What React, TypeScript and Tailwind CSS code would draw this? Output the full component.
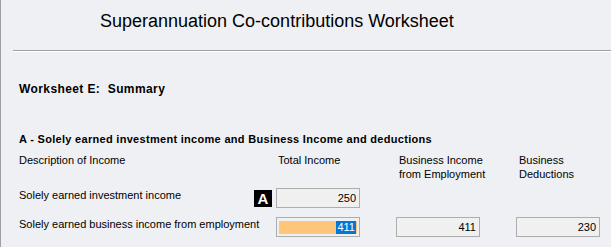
import React from 'react';

const Field: React.FC<{ value: string }> = ({ value }) => (
    <div className="w-[84px] h-[20px] border border-[#adadad] bg-[#f0f0f0] pr-[3px] text-right text-[11px] leading-[18px]">
        {value}
    </div>
);

const SelectedField: React.FC<{ value: string }> = ({ value }) => (
    <div className="w-[84px] h-[20px] border border-[#adadad] bg-[#f0f0f0] px-[2px] pt-[3px]">
        <div className="h-[13px] bg-[#ffc578] flex justify-end pr-[1px]">
            <span className="bg-[#0078d7] text-white text-[11px] leading-[13px] px-[1px]">{value}</span>
        </div>
    </div>
);

export default function App() {
    return (
        <div className="min-h-[247px] w-[611px] overflow-hidden bg-[#eff0f4] border-l border-[#a0a0a0] font-['Liberation_Sans',Arial,sans-serif] text-black">
            <h1 className="pt-[11px] pl-[99px] text-[18px] leading-[21px]">
                Superannuation Co-contributions Worksheet
            </h1>
            <div className="mt-[18px] ml-[12px] border-t border-[#a0a0a0] border-b border-b-white" />

            <div className="pl-[18px]">
                <h2 className="mt-[30px] text-[12px] leading-[14px] font-bold tracking-[0.4px]">Worksheet E:&nbsp; Summary</h2>

                <h3 className="mt-[37px] text-[11px] leading-[13px] font-bold tracking-[0.3px]">
                    A - Solely earned investment income and Business Income and deductions
                </h3>

                <div className="mt-[7px] flex text-[11px] leading-[14px]">
                    <div className="w-[257px]">Description of Income</div>
                    <div className="w-[120px] pl-[2px]">Total Income</div>
                    <div className="w-[120px] pl-[3px]">
                        Business Income
                        <br />
                        from Employment
                    </div>
                    <div className="pl-[3px]">
                        Business
                        <br />
                        Deductions
                    </div>
                </div>

                <div className="mt-[7px] flex items-start text-[11px] leading-[14px]">
                    <div className="w-[235px]">Solely earned investment income</div>
                    <div className="mt-[2px] mr-[4px] w-[18px] h-[17px] bg-black text-white font-bold text-[15px] leading-[17px] text-center">
                        A
                    </div>
                    <Field value="250" />
                </div>

                <div className="mt-[9px] flex items-start text-[11px] leading-[14px]">
                    <div className="w-[257px]">Solely earned business income from employment</div>
                    <SelectedField value="411" />
                    <div className="ml-[36px]">
                        <Field value="411" />
                    </div>
                    <div className="ml-[36px]">
                        <Field value="230" />
                    </div>
                </div>
            </div>
        </div>
    );
}
